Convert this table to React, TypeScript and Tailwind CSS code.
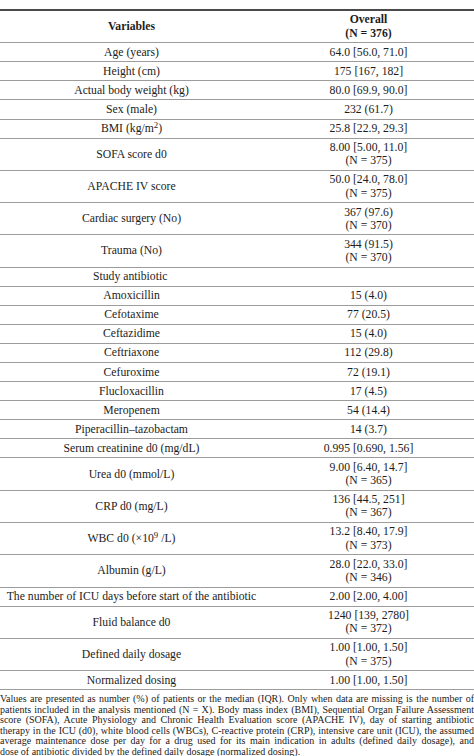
import React from "react";

type Row = {
  label: React.ReactNode;
  value?: string;
  n?: string;
  indent?: boolean;
};

const rows: Row[] = [
  { label: "Age (years)", value: "64.0 [56.0, 71.0]" },
  { label: "Height (cm)", value: "175 [167, 182]" },
  { label: "Actual body weight (kg)", value: "80.0 [69.9, 90.0]" },
  { label: "Sex (male)", value: "232 (61.7)" },
  {
    label: (
      <>
        BMI (kg/m<sup>2</sup>)
      </>
    ),
    value: "25.8 [22.9, 29.3]",
  },
  { label: "SOFA score d0", value: "8.00 [5.00, 11.0]", n: "(N = 375)" },
  { label: "APACHE IV score", value: "50.0 [24.0, 78.0]", n: "(N = 375)" },
  { label: "Cardiac surgery (No)", value: "367 (97.6)", n: "(N = 370)" },
  { label: "Trauma (No)", value: "344 (91.5)", n: "(N = 370)" },
  { label: "Study antibiotic", indent: true },
  { label: "Amoxicillin", value: "15 (4.0)" },
  { label: "Cefotaxime", value: "77 (20.5)" },
  { label: "Ceftazidime", value: "15 (4.0)" },
  { label: "Ceftriaxone", value: "112 (29.8)" },
  { label: "Cefuroxime", value: "72 (19.1)" },
  { label: "Flucloxacillin", value: "17 (4.5)" },
  { label: "Meropenem", value: "54 (14.4)" },
  { label: "Piperacillin–tazobactam", value: "14 (3.7)" },
  { label: "Serum creatinine d0 (mg/dL)", value: "0.995 [0.690, 1.56]" },
  { label: "Urea d0 (mmol/L)", value: "9.00 [6.40, 14.7]", n: "(N = 365)" },
  { label: "CRP d0 (mg/L)", value: "136 [44.5, 251]", n: "(N = 367)" },
  {
    label: (
      <>
        WBC d0 (×10<sup>9</sup> /L)
      </>
    ),
    value: "13.2 [8.40, 17.9]",
    n: "(N = 373)",
  },
  { label: "Albumin (g/L)", value: "28.0 [22.0, 33.0]", n: "(N = 346)" },
  { label: "The number of ICU days before start of the antibiotic", value: "2.00 [2.00, 4.00]" },
  { label: "Fluid balance d0", value: "1240 [139, 2780]", n: "(N = 372)" },
  { label: "Defined daily dosage", value: "1.00 [1.00, 1.50]", n: "(N = 375)" },
  { label: "Normalized dosing", value: "1.00 [1.00, 1.50]" },
];

const footnote = [
  "Values are presented as number (%) of patients or the median (IQR). Only when data are missing is the number of",
  "patients included in the analysis mentioned (N = X). Body mass index (BMI), Sequential Organ Failure Assessment",
  "score (SOFA), Acute Physiology and Chronic Health Evaluation score (APACHE IV), day of starting antibiotic",
  "therapy in the ICU (d0), white blood cells (WBCs), C-reactive protein (CRP), intensive care unit (ICU), the assumed",
  "average maintenance dose per day for a drug used for its main indication in adults (defined daily dosage), and",
  "dose of antibiotic divided by the defined daily dosage (normalized dosing).",
];

export default function App() {
  return (
    <div className="h-[756px] w-[474px] overflow-hidden bg-white pt-[9px] font-['Liberation_Serif',serif] text-[#1c1c1c]">
      {/* Table */}
      <table className="w-full border-collapse text-[11.7px] leading-[13.2px]">
        <colgroup>
          <col className="w-[263px]" />
          <col />
        </colgroup>
        <thead>
          <tr className="border-t-2 border-b border-t-[#4a4a4a] border-b-[#9c9c9c]">
            <th className="py-[2.4px] text-center font-bold">Variables</th>
            <th className="py-[2.4px] text-center font-bold">
              Overall
              <br />
              (N = 376)
            </th>
          </tr>
        </thead>
        <tbody>
          {rows.map((r, i) => (
            <tr key={i} className="border-b border-[#9c9c9c]">
              <td className={r.indent ? "py-[2.45px] pl-[93px] text-left" : "py-[2.45px] text-center"}>
                {r.label}
              </td>
              <td className="py-[2.45px] text-center">
                {r.value}
                {r.n && (
                  <>
                    <br />
                    {r.n}
                  </>
                )}
              </td>
            </tr>
          ))}
        </tbody>
      </table>

      {/* Footnote */}
      <div className="pt-[4px] text-[10px] leading-[10.5px]">
        {footnote.map((line, i) => (
          <div
            key={i}
            className={i < footnote.length - 1 ? "text-justify [text-align-last:justify]" : "text-left"}
          >
            {line}
          </div>
        ))}
      </div>
    </div>
  );
}
